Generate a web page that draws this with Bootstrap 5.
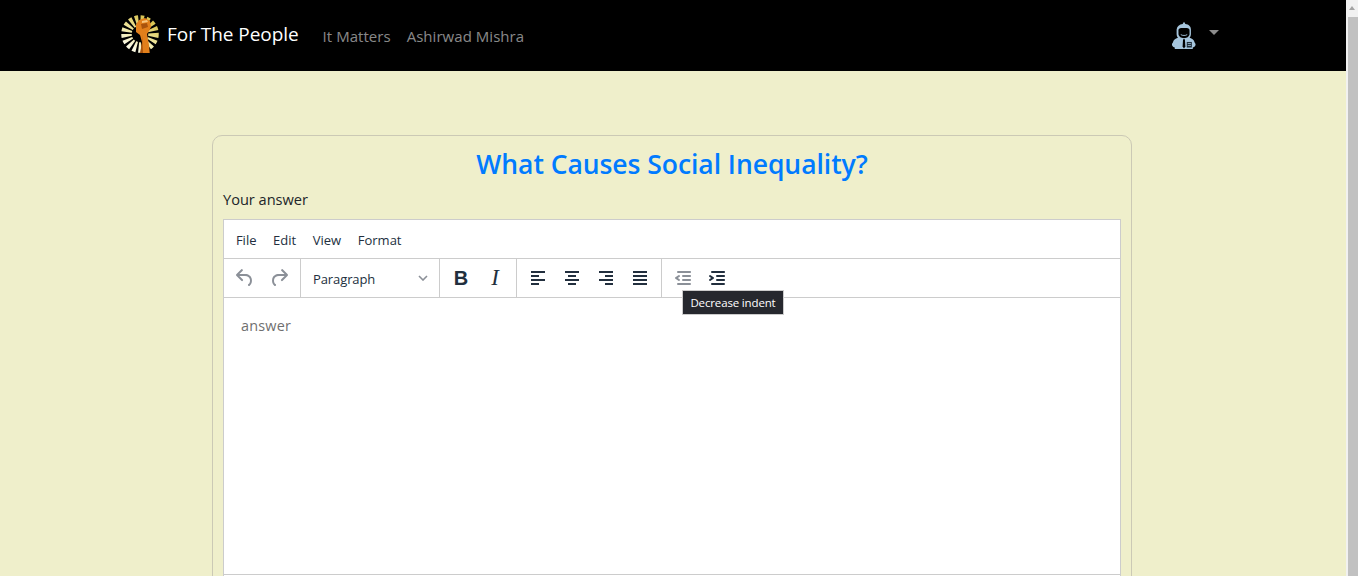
<!DOCTYPE html>
<html lang="en"><head><meta charset="utf-8"><title>For The People</title>
<link href="https://cdn.jsdelivr.net/npm/bootstrap@5.3.0/dist/css/bootstrap.min.css" rel="stylesheet">
<style>
:root{--ui:"Open Sans","Noto Sans",sans-serif}
html,body{background:#efefcb;}
body{font-family:var(--ui);font-size:15px;color:#212529;padding-right:12px}
.topbar{background:#000;height:71px;padding:0}
.topbar .inner{width:1140px;margin:0 auto;padding:0 12px 0 18px;display:flex;align-items:center;height:100%}
.brandlink{color:#fff;font-size:19px;text-decoration:none;display:flex;align-items:center;gap:8px;margin-right:16px;letter-spacing:-.05px;padding-bottom:3px}
.toplink{color:rgba(255,255,255,.55);font-size:15px;padding:2px 8px 0;text-decoration:none;letter-spacing:.04px}
.usermenu{margin-left:auto;display:flex;align-items:center;gap:13px;padding-right:12px;padding-bottom:1px}
.usercaret{width:0;height:0;border-left:5px solid transparent;border-right:5px solid transparent;border-top:5px solid rgba(255,255,255,.55);margin-bottom:5px}
.pagewrap{width:920px;margin:64px auto 40px;position:relative;left:-1px}
.answerbox{border:1px solid #cbc9b5;border-radius:10px;padding:10px;padding-top:0}
.qtitle{color:#007bff;font-size:26.5px;font-weight:600;text-align:center;margin:0;line-height:56px;letter-spacing:-.05px}
.anslabel{font-size:14.6px;line-height:18px;margin-bottom:11px;margin-top:-2px;letter-spacing:-.02px}
.editorframe{background:#fff;border:1px solid #ccc;height:381px;display:flex;flex-direction:column;position:relative}
.menurow{height:39px;flex:none;display:flex;align-items:center;padding:3px 0 0 3.600px;border-bottom:1px solid #ccc;font-size:13px;color:#222f3e;letter-spacing:0}
.menurow span{padding:0 8.300px}
.toolrow{height:39px;display:flex;border-bottom:1px solid #ccc;color:#222f3e;flex:none}
.toolgroup{display:flex;align-items:center;padding:0 4px;border-right:1px solid #ccc;gap:0}
.toolgroup:last-child{border-right:0}
.toolbtn{width:34px;height:34px;display:flex;align-items:center;justify-content:center}
.toolbtn svg{width:24px;height:24px;fill:currentColor}
.toolbtn.off svg{fill:#8b9098}
.boldmark{font:700 20px "Liberation Sans",sans-serif}
.italmark{font:italic 400 23px "Liberation Serif",serif}
.paragraphpick{width:139px;padding:0 11px 0 12px;display:flex;align-items:center;justify-content:space-between;font-size:13px;letter-spacing:-.1px;border-right:1px solid #ccc}
.paragraphpick span{padding-top:3px}
.editbody{flex:1;padding:17px;font-size:14.4px;color:#6f6f6f;line-height:22px;letter-spacing:.2px}
.statusline{height:25px;border-top:1px solid #ccc;flex:none}
.hoverhint{position:absolute;left:458px;top:70px;width:102px;height:25px;background:#26282e;border:1px solid #ccc;color:#fff;font-size:11.5px;letter-spacing:-.15px;display:flex;align-items:center;justify-content:center;white-space:nowrap}
.fakebar{position:fixed;top:0;right:0;bottom:0;width:12px;background:#f1f1f1}
.fakebar i{position:absolute;left:2px;right:0;top:17px;bottom:0;background:#c1c1c1}
.fakebar b{position:absolute;left:3px;top:6px;width:0;height:0;border-left:3.5px solid transparent;border-right:3.5px solid transparent;border-bottom:4px solid #a3a3a3}
</style></head>
<body>
<nav class="navbar topbar">
<div class="inner">
<a class="brandlink" href="#">
<svg width="38" height="38" viewBox="0 0 38 38"><defs><linearGradient id="raygrad" x1="0.800" y1="0" x2="0.200" y2="1"><stop offset="0" stop-color="#d9c555"/><stop offset=".55" stop-color="#efe6a0"/><stop offset="1" stop-color="#faf8e2"/></linearGradient></defs>
<circle cx="19" cy="19" r="19" fill="#000"/>
<circle cx="19" cy="19" r="13.500" fill="none" stroke="url(#raygrad)" stroke-width="10.500" stroke-dasharray="2.900 2"/>
<path d="M15 9.500 18 5l6-2 5 3 1 6-2 4-2 3 2 11 1 11H19l2-14-2-7-4-3z" fill="#e27f1b"/>
<path d="M21 19l1 19h-3l2-10zM20 9l6-1 1 4-6 2z" fill="#a9530d"/>
<path d="M21 6l5-1 1 2-6 1z" fill="#f7c67f"/></svg>
For The People</a>
<a class="toplink" href="#">It Matters</a>
<a class="toplink" href="#">Ashirwad Mishra</a>
<div class="usermenu">
<svg width="24" height="31" viewBox="0 0 26 32"><path d="M13 1l1.500 2.500C18 4 20.500 6 20.500 9.500v5c0 1.500-.5 3-1.500 4 3 1 5 2.500 5.500 5 1 1 1.500 2.500.5 4-.5 1-1.500 1.500-2.500 1.500v1.500H3V29c-1 0-2-.5-2.500-1.500-1-1.500-.5-3 .5-4 .5-2.500 2.500-4 5.500-5-1-1-1.500-2.500-1.500-4v-5C5.500 6 8 4 11.500 3.500z" fill="#a6c5dc"/><path d="M7 10.500C7 8 10 8 13 8s6 0 6 2.500v4c0 2.500-2.700 4.500-6 4.500s-6-2-6-4.500z" fill="#000"/><path d="M12 20h2l.5 8-1.500 2-1.500-2z" fill="#000"/><path d="M16 23h5.500v6H16z" fill="#1f2d38"/><path d="M17 24.500h3.500v.8H17zM17 26.500h3.500v.8H17z" fill="#a6c5dc"/><path d="M9.500 15c1.500 1.300 5.500 1.300 7 0" stroke="#a6c5dc" fill="none"/></svg>
<span class="usercaret"></span>
</div>
</div>
</nav>
<main class="pagewrap">
<div class="answerbox">
<h1 class="qtitle">What Causes Social Inequality?</h1>
<div class="anslabel">Your answer</div>
<div class="editorframe">
<div class="menurow"><span>File</span><span>Edit</span><span>View</span><span>Format</span></div>
<div class="toolrow">
<div class="toolgroup">
<div class="toolbtn off"><svg viewBox="0 0 24 24"><path d="M6.400 8H12c3.700 0 6.200 2 6.800 5.100.6 2.700-.4 5.600-2.300 6.800a1 1 0 0 1-1-1.800c1.100-.6 1.800-2.700 1.400-4.600-.5-2.100-2.100-3.500-4.900-3.500H6.400l3.300 3.300a1 1 0 1 1-1.400 1.400l-5-5a1 1 0 0 1 0-1.400l5-5a1 1 0 0 1 1.400 1.400L6.400 8Z"/></svg></div>
<div class="toolbtn off"><svg viewBox="0 0 24 24"><path d="M17.600 8H12c-3.700 0-6.200 2-6.800 5.100-.6 2.700.4 5.600 2.300 6.800a1 1 0 0 0 1-1.800c-1.100-.6-1.800-2.700-1.400-4.600.5-2.100 2.100-3.500 4.900-3.500h5.600l-3.300 3.300a1 1 0 1 0 1.400 1.400l5-5a1 1 0 0 0 0-1.400l-5-5a1 1 0 0 0-1.400 1.400L17.600 8Z"/></svg></div>
</div>
<div class="paragraphpick"><span>Paragraph</span><svg width="10" height="6" viewBox="0 0 10 6"><path d="M1 1l4 4 4-4" fill="none" stroke="#8b9098" stroke-width="1.600"/></svg></div>
<div class="toolgroup">
<div class="toolbtn boldmark">B</div>
<div class="toolbtn italmark">I</div>
</div>
<div class="toolgroup">
<div class="toolbtn"><svg viewBox="0 0 24 24"><path d="M5 5h14v2H5zm0 4h8v2H5zm0 4h14v2H5zm0 4h8v2H5z"/></svg></div>
<div class="toolbtn"><svg viewBox="0 0 24 24"><path d="M5 5h14v2H5zm3 4h8v2H8zm-3 4h14v2H5zm3 4h8v2H8z"/></svg></div>
<div class="toolbtn"><svg viewBox="0 0 24 24"><path d="M5 5h14v2H5zm6 4h8v2h-8zm-6 4h14v2H5zm6 4h8v2h-8z"/></svg></div>
<div class="toolbtn"><svg viewBox="0 0 24 24"><path d="M5 5h14v2H5zm0 4h14v2H5zm0 4h14v2H5zm0 4h14v2H5z"/></svg></div>
</div>
<div class="toolgroup">
<div class="toolbtn off"><svg viewBox="0 0 24 24"><path d="M7 5h12c.6 0 1 .4 1 1s-.4 1-1 1H7a1 1 0 1 1 0-2Zm5 4h7c.6 0 1 .4 1 1s-.4 1-1 1h-7a1 1 0 0 1 0-2Zm0 4h7c.6 0 1 .4 1 1s-.4 1-1 1h-7a1 1 0 0 1 0-2Zm-5 4h12a1 1 0 0 1 0 2H7a1 1 0 0 1 0-2Zm1.600-3.800a1 1 0 0 1-1.200 1.600l-3-2a1 1 0 0 1 0-1.600l3-2a1 1 0 0 1 1.200 1.600L6.800 12l1.800 1.200Z"/></svg></div>
<div class="toolbtn"><svg viewBox="0 0 24 24"><path d="M7 5h12c.6 0 1 .4 1 1s-.4 1-1 1H7a1 1 0 1 1 0-2Zm5 4h7c.6 0 1 .4 1 1s-.4 1-1 1h-7a1 1 0 0 1 0-2Zm0 4h7c.6 0 1 .4 1 1s-.4 1-1 1h-7a1 1 0 0 1 0-2Zm-5 4h12a1 1 0 0 1 0 2H7a1 1 0 0 1 0-2Zm-2.600-3.800L6.200 12l-1.800-1.200a1 1 0 0 1 1.200-1.600l3 2a1 1 0 0 1 0 1.600l-3 2a1 1 0 1 1-1.200-1.600Z"/></svg></div>
</div>
</div>
<div class="editbody">answer</div>
<div class="statusline"></div>
<div class="hoverhint">Decrease indent</div>
</div>
</div>
</main>
<div class="fakebar"><b></b><i></i></div>
</body></html>
